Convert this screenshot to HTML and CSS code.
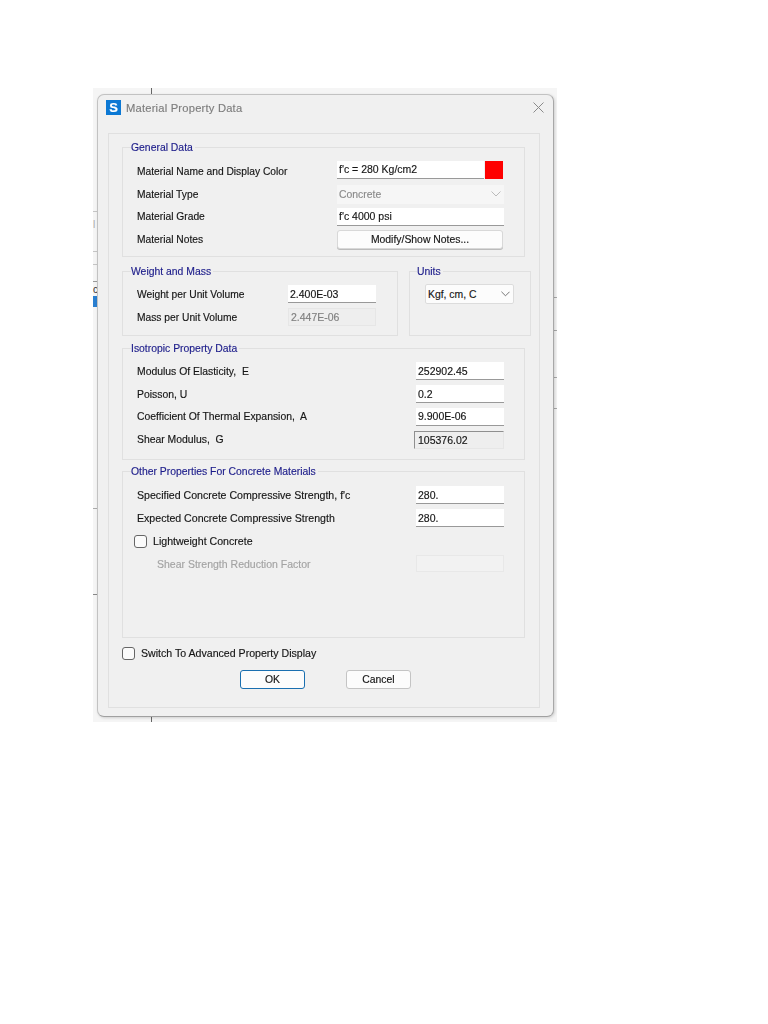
FILE: index.html
```html
<!DOCTYPE html>
<html lang="en">
<head>
<meta charset="utf-8">
<title>Material Property Data</title>
<link rel="stylesheet" href="styles.css">
</head>
<body>
<main class="shot">
  <div class="behind" aria-hidden="true">
    <span class="bg-line tick-top"></span>
    <span class="bg-line tick-bottom"></span>
    <span class="bg-band band-a"></span>
    <span class="bg-band band-b"></span>
    <span class="bg-band band-c"></span>
    <span class="bg-band band-e"></span>
    <span class="bg-band band-d"></span>
    <span class="bg-band band-f"></span>
    <span class="bg-char char-l">l</span>
    <span class="bg-char char-c">c</span>
    <span class="bg-sel"></span>
    <span class="bg-band right-a"></span>
    <span class="bg-band right-d"></span>
    <span class="bg-band right-b"></span>
    <span class="bg-band right-c"></span>
  </div>
  <section class="dialog">
    <header class="titlebar">
      <span class="app-icon">S</span>
      <span class="title">Material Property Data</span>
      <svg class="close" viewBox="0 0 11 11" width="11" height="11"><path d="M.5.5l10 10M10.500.5l-10 10"/></svg>
    </header>
    <div class="panel">
      <fieldset class="group general">
        <legend>General Data</legend>
        <div class="row"><label>Material Name and Display Color</label>
          <div class="name-wrap"><span class="input name">f'c = 280 Kg/cm2</span><span class="swatch"></span></div></div>
        <div class="row"><label>Material Type</label>
          <div class="select disabled wide"><span>Concrete</span><svg viewBox="0 0 10 6" width="10" height="6"><path d="M.5.5L5 5 9.500.5"/></svg></div></div>
        <div class="row"><label>Material Grade</label><span class="input wide">f'c 4000 psi</span></div>
        <div class="row"><label>Material Notes</label><button class="btn notes">Modify/Show Notes...</button></div>
      </fieldset>

      <div class="pair">
        <fieldset class="group weight">
          <legend>Weight and Mass</legend>
          <div class="row"><label>Weight per Unit Volume</label><span class="input short">2.400E-03</span></div>
          <div class="row"><label>Mass per Unit Volume</label><span class="input short readonly">2.447E-06</span></div>
        </fieldset>
        <fieldset class="group units">
          <legend>Units</legend>
          <div class="select units-select"><span>Kgf, cm, C</span><svg viewBox="0 0 10 6" width="9" height="6"><path d="M.5.5L5 5 9.500.5"/></svg></div>
        </fieldset>
      </div>

      <fieldset class="group isotropic">
        <legend>Isotropic Property Data</legend>
        <div class="row"><label>Modulus Of Elasticity,&nbsp; E</label><span class="input num">252902.45</span></div>
        <div class="row"><label>Poisson, U</label><span class="input num">0.2</span></div>
        <div class="row"><label>Coefficient Of Thermal Expansion,&nbsp; A</label><span class="input num">9.900E-06</span></div>
        <div class="row"><label>Shear Modulus,&nbsp; G</label><span class="input num sunken">105376.02</span></div>
      </fieldset>

      <fieldset class="group other">
        <legend>Other Properties For Concrete Materials</legend>
        <div class="row"><label>Specified Concrete Compressive Strength, f'c</label><span class="input num">280.</span></div>
        <div class="row"><label>Expected Concrete Compressive Strength</label><span class="input num">280.</span></div>
        <div class="check light"><span class="box"></span><label>Lightweight Concrete</label></div>
        <div class="row faded"><label>Shear Strength Reduction Factor</label><span class="input num blank"></span></div>
      </fieldset>

      <div class="check advanced"><span class="box"></span><label>Switch To Advanced Property Display</label></div>
      <div class="actions">
        <button class="btn action ok">OK</button>
        <button class="btn action">Cancel</button>
      </div>
    </div>
  </section>
</main>
</body>
</html>
```
FILE: styles.css
```css
* { box-sizing: border-box; }
html, body { margin: 0; background: #fff; }
body {
  width: 768px;
  height: 1024px;
  overflow: hidden;
  font-family: "Liberation Sans", Arial, sans-serif;
  font-size: 10.4px;
  color: #151515;
}
.shot {
  position: relative;
  width: 464px;
  height: 634px;
  margin: 88px 0 0 93px;
  padding: 6px 3px 0 4px;
  background: #f5f5f5;
}
.behind { position: absolute; inset: 0; }
.bg-line { position: absolute; left: 58px; width: 1px; height: 6px; background: #666; }
.tick-top { top: 0; }
.tick-bottom { top: 628px; }
.bg-band { position: absolute; left: 0; width: 4px; height: 1px; background: #c4c4c4; }
.band-a { top: 123px; }
.band-b { top: 163px; }
.band-c { top: 176px; }
.band-e { top: 193px; background: #999; }
.band-d { top: 420px; background: #aaa; }
.band-f { top: 506px; background: #888; }
.right-a { left: 461px; width: 3px; top: 209px; background: #aaa; }
.right-d { left: 461px; width: 3px; top: 242px; background: #aaa; }
.right-b { left: 461px; width: 3px; top: 289px; background: #aaa; }
.right-c { left: 461px; width: 3px; top: 320px; background: #aaa; }
.bg-char { position: absolute; left: 0; font-size: 10px; line-height: 10px; color: #aaa; }
.char-l { top: 132px; }
.char-c { top: 197px; color: #333; }
.bg-sel { position: absolute; left: 0; top: 208px; width: 4px; height: 11px; background: #2a7fd0; }

.dialog {
  position: relative;
  width: 457px;
  height: 623px;
  background: #f0f0f0;
  border: 1px solid #c2c2c2;
  border-bottom-color: #a0a0a0;
  border-right-color: #a8a8a8;
  border-radius: 7px;
  box-shadow: 1px 1px 3px rgba(0, 0, 0, .16);
  padding: 0 14px 10px 10px;
  filter: blur(.35px);
  -webkit-text-stroke: .15px currentColor;
}
.titlebar {
  height: 25px;
  display: flex;
  align-items: center;
  margin: 0 0 13px -2px;
  gap: 5px;
}
.app-icon {
  width: 15px;
  height: 15px;
  background: #0b78d4;
  color: #fff;
  font-weight: 700;
  font-size: 13px;
  line-height: 15px;
  text-align: center;
}
.title { color: #7d7d7d; font-size: 11.2px; letter-spacing: .2px; }
.close { margin-left: auto; margin-right: -5px; fill: none; stroke: #8a8a8a; stroke-width: 1; }
.panel {
  height: 575px;
  width: 432px;
  border: 1px solid #e0e0e0;
  padding: 13px 13px 0;
  background: #f0f0f0;
}
.group {
  margin: 0;
  min-width: 0;
  border: 1px solid #e0e0e0;
  padding: 0 20px 0 14px;
  position: relative;
  flex: none;
}
.group legend {
  padding: 0 2px 0 0;
  margin-left: -6px;
  color: #1c1c8a;
  font-size: 10.4px;
  line-height: 12px;
  transform: translateY(1px);
}
.units legend { margin-left: -8px; }
.row {
  height: 22.800px;
  display: flex;
  align-items: center;
  justify-content: space-between;
}
.general { height: 116px; width: 403px; margin-top: -6px; padding-top: 7px; }
.general label, .weight label { font-size: 10.25px; }
.other label, .advanced label { font-size: 10.6px; }
.pair { display: flex; gap: 11px; margin-top: 8px; }
.weight { width: 276px; height: 71px; padding: 6px 21px 0 14px; }
.units { width: 122px; height: 71px; padding: 7px 0 0 15px; }
.isotropic { width: 403px; height: 118px; margin-top: 6px; padding-top: 6px; }
.other { width: 403px; height: 173px; margin-top: 5px; padding-top: 7px; }
.input {
  display: flex;
  align-items: center;
  height: 18px;
  background: #fff;
  border-bottom: 1.500px solid #999;
  color: #151515;
  padding-left: 2px;
  font-size: 10.5px;
}
.wide { width: 167px; }
.name-wrap { display: flex; width: 167px; align-items: center; margin-bottom: 3px; }
.name { width: 147px; }
.swatch { width: 18px; height: 18px; background: #fe0000; margin-left: 1px; }
.select {
  display: flex;
  align-items: center;
  justify-content: space-between;
  height: 19px;
  padding: 0 3px 0 2px;
}
.select svg { fill: none; stroke: #666; stroke-width: 1; }
.select.disabled { background: #f6f6f6; color: #8a8a8a; }
.select.disabled svg { stroke: #bbb; }
.units-select {
  width: 89px;
  background: #fcfcfc;
  border: 1px solid #dcdcdc;
  border-radius: 2px;
  height: 20px;
}
.short { width: 88px; }
.readonly { background: #eee; border: 1px solid #e6e6e6; color: #808080; }
.num { width: 88px; }
.sunken {
  background: #eee;
  border: 1px solid #e6e6e6;
  border-top: 1.500px solid #8f8f8f;
  border-left: 1.500px solid #8f8f8f;
  margin-left: -1px;
  width: 90px;
  padding-left: 3px;
}
.blank { background: #f2f2f2; border: 1px solid #e8e8e8; height: 17px; }
.faded label { color: #a3a3a3; margin-left: 20px; font-size: 10.5px; }
.btn {
  font: inherit;
  color: #151515;
  background: #fcfcfc;
  border: 1px solid #d8d8d8;
  border-radius: 3px;
}
.notes { width: 166px; height: 19px; margin-right: 1px; padding: 0; box-shadow: 0 1px 0 #bbb; }
.check { display: flex; align-items: center; }
.box {
  width: 13px;
  height: 13px;
  background: #fbfbfb;
  border: 1px solid #666;
  border-radius: 3px;
}
.light { height: 23px; gap: 6px; margin-left: -3px; }
.advanced { height: 14px; gap: 6px; margin-top: 8px; }
.actions { display: flex; gap: 41px; margin: 10px 0 0 118px; }
.action { width: 65px; height: 19px; padding: 0; border-color: #c4c4c4; }
.ok { border: 1.500px solid #1a6fb0; }
```
